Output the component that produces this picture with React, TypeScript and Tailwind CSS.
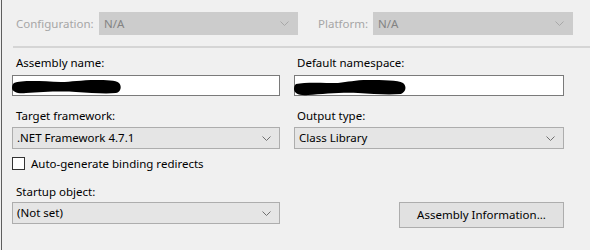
import React from "react";

const font = { fontFamily: '"Noto Sans", "Liberation Sans", sans-serif' };

function Chevron({ color }: { color: string }) {
  return (
    <svg width="9" height="5" viewBox="0 0 9 5" className="shrink-0">
      <path d="M0.5 0.5 L4.5 4.5 L8.5 0.5" fill="none" stroke={color} strokeWidth="1" />
    </svg>
  );
}

function Combo({ text, disabled, className }: { text: string; disabled?: boolean; className: string }) {
  return (
    <div
      className={
        "flex items-center justify-between pl-[4px] pr-[8px] border text-[11.5px] " +
        (disabled
          ? "bg-[#cccccc] border-[#cccccc] text-[#838383] "
          : "bg-[#e5e5e5] border-[#adadad] text-black ") +
        className
      }
    >
      <span className="leading-none">{text}</span>
      <Chevron color={disabled ? "#a8a8a8" : "#707070"} />
    </div>
  );
}

function Blob({ variant }: { variant: 1 | 2 }) {
  if (variant === 1) {
    return (
      <svg width="112" height="18" viewBox="0 0 112 18" className="absolute left-[-2px] top-[1px]">
        <path
          d="M3 6 C10 3 30 4 50 5 C60 5 70 3 85 3 C95 3 105 3 108 6 C111 9 110 15 105 16 C95 17 80 16 65 15 C50 14 30 15 15 16 C7 17 1 15 1 11 C1 8 2 7 3 6 Z"
          fill="#000"
        />
      </svg>
    );
  }
  return (
    <svg width="116" height="18" viewBox="0 0 116 18" className="absolute left-[-2px] top-[2px]">
      <path
        d="M3 6 C12 4 30 5 45 5 C55 4 62 2 75 2 C90 2 105 2 110 5 C114 8 113 14 108 16 C95 17 80 16 65 15 C50 14 30 16 15 17 C6 18 1 15 1 11 C1 8 2 7 3 6 Z"
        fill="#000"
      />
    </svg>
  );
}

export default function App() {
  return (
    <div className="w-[590px] h-[250px] bg-[#f0f0f0] flex overflow-hidden" style={font}>
      <div className="w-[1px] shrink-0" />
      <div className="w-[1px] shrink-0 bg-[#5e5e5e]" />
      <div className="flex-1 flex flex-col">
        {/* Top disabled row */}
        <div className="flex items-center mt-[12px] h-[23px]">
          <span className="ml-[14px] w-[83px] text-[11.5px] text-[#a6a6a6]">Configuration:</span>
          <Combo text="N/A" disabled className="w-[199px] h-[23px]" />
          <span className="ml-[20px] w-[55px] text-[11.5px] text-[#a6a6a6]">Platform:</span>
          <Combo text="N/A" disabled className="w-[200px] h-[23px]" />
        </div>
        {/* separator */}
        <div className="mt-[11px] ml-[11px] h-[2px] bg-[#d5d5d5]" />

        <div className="grid grid-cols-[268px_270px] gap-x-[14px] ml-[10px] mt-[6px] text-[11.5px] text-black">
          <div className="h-[17px] leading-[17px] pl-[4px]">Assembly name:</div>
          <div className="h-[17px] leading-[17px] pl-[3px]">Default namespace:</div>

          <div className="relative mt-[4px] h-[21px] bg-white border border-[#7a7a7a]">
            <Blob variant={1} />
          </div>
          <div className="relative mt-[4px] h-[21px] bg-white border border-[#7a7a7a]">
            <Blob variant={2} />
          </div>

          <div className="mt-[12px] h-[16px] leading-[16px] pl-[4px]">Target framework:</div>
          <div className="mt-[12px] h-[16px] leading-[16px] pl-[3px]">Output type:</div>

          <Combo text=".NET Framework 4.7.1" className="mt-[3px] h-[22px]" />
          <Combo text="Class Library" className="mt-[3px] h-[22px]" />

          <div className="col-span-2 flex items-center mt-[8px] h-[13px]">
            <div className="w-[13px] h-[13px] bg-white border border-[#333333]" />
            <span className="ml-[6px] leading-none">Auto-generate binding redirects</span>
          </div>

          <div className="col-span-2 mt-[14px] h-[16px] leading-[16px] pl-[4px]">Startup object:</div>

          <Combo text="(Not set)" className="mt-[2px] h-[22px]" />
          <div className="mt-[2px] flex justify-end">
            <button className="w-[165px] h-[26px] bg-[#e1e1e1] border border-[#adadad] text-[11.5px] text-black">
              Assembly Information...
            </button>
          </div>
        </div>
      </div>
    </div>
  );
}
